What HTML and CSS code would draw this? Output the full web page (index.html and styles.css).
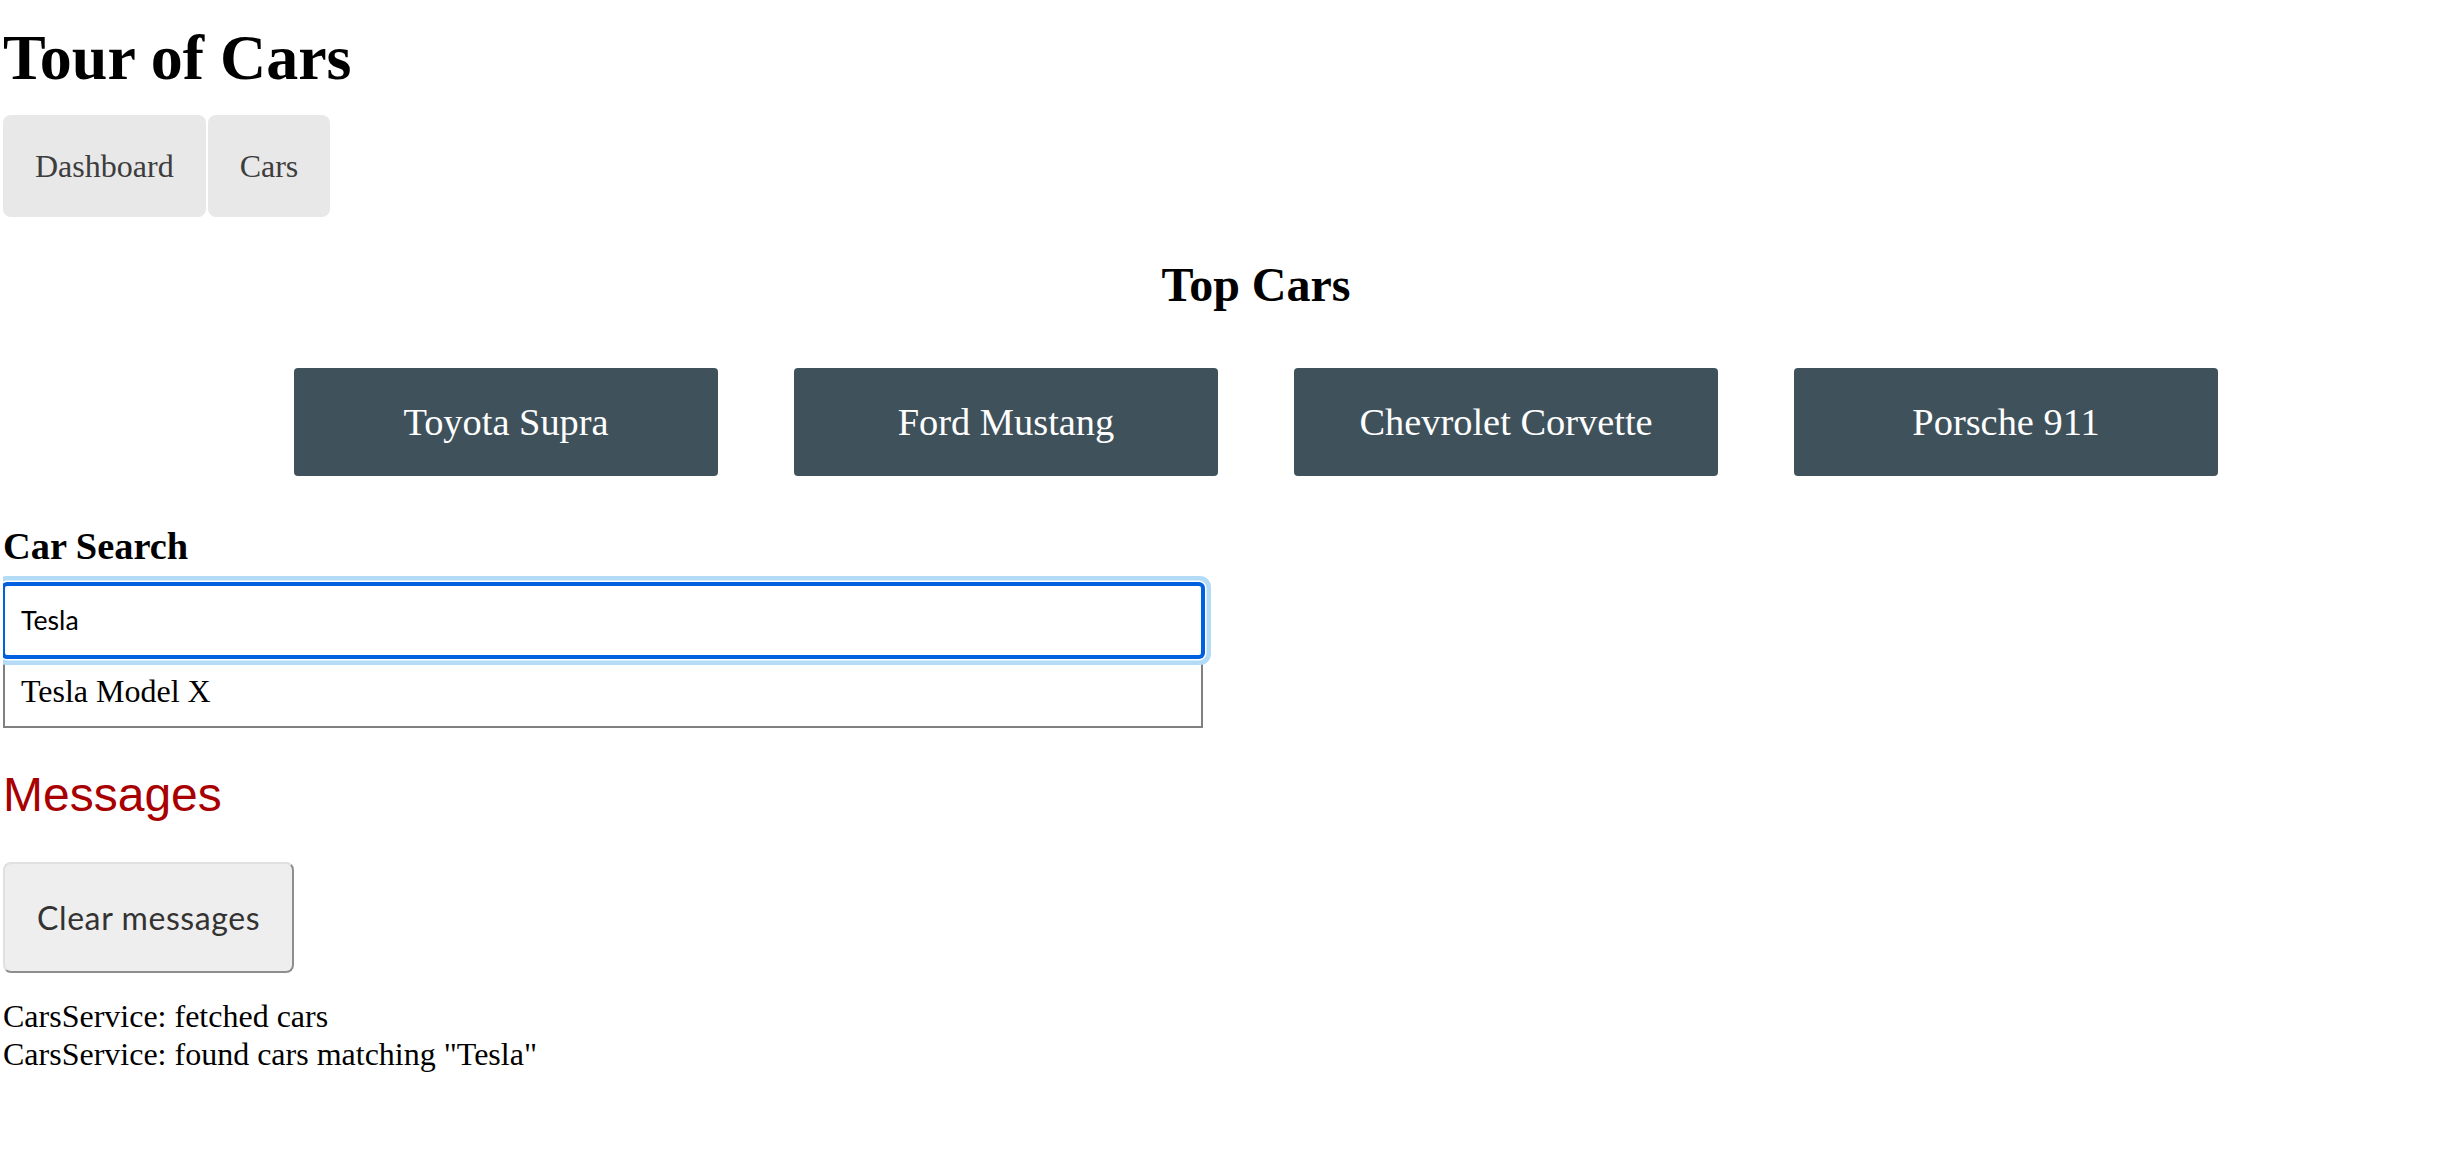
FILE: index.html
```html
<!DOCTYPE html>
<html lang="en">
<head>
<meta charset="utf-8">
<title>Tour of Cars</title>
<link rel="stylesheet" href="styles.css">
</head>
<body>
<div class="app">
  <h1 class="title">Tour of Cars</h1>
  <nav class="main-nav">
    <a class="nav-link" href="#">Dashboard</a>
    <a class="nav-link" href="#">Cars</a>
  </nav>
  <section class="dashboard">
    <h2 class="dash-title">Top Cars</h2>
    <div class="cars-menu">
      <a class="car-card" href="#">Toyota Supra</a>
      <a class="car-card" href="#">Ford Mustang</a>
      <a class="car-card" href="#">Chevrolet Corvette</a>
      <a class="car-card" href="#">Porsche 911</a>
    </div>
    <div class="search">
      <label class="search-label" for="search-box">Car Search</label>
      <input class="search-input" id="search-box" type="text" value="Tesla" autofocus>
      <ul class="search-result">
        <li class="result-item"><a class="result-link" href="#">Tesla Model X</a></li>
      </ul>
    </div>
  </section>
  <section class="messages">
    <h2 class="messages-title">Messages</h2>
    <button type="button" class="clear">Clear messages</button>
    <div class="message">CarsService: fetched cars</div>
    <div class="message">CarsService: found cars matching "Tesla"</div>
  </section>
</div>
</body>
</html>
```
FILE: styles.css
```css
html {
  overflow: hidden;
}

body {
  margin: 0 0 0 3px;
  font-family: "Liberation Serif", "Times New Roman", serif;
  font-size: 32px;
  color: #000;
  background: #fff;
}

.app {
  width: 2506px;
}

.title {
  font-size: 64px;
  font-weight: bold;
  margin: 21px 0 0;
}

.main-nav {
  display: flex;
  gap: 2px;
  margin-top: 20px;
}

.nav-link {
  padding: 32px;
  line-height: 38px;
  text-decoration: none;
  background-color: #e8e8e8;
  color: #3d3d3d;
  border-radius: 8px;
}

.dash-title {
  text-align: center;
  font-size: 48px;
  font-weight: bold;
  margin: 39.84px 0;
}

.cars-menu {
  max-width: 2000px;
  margin: 0 auto;
  display: flex;
  flex-wrap: wrap;
  justify-content: space-around;
  align-items: flex-start;
}

.car-card {
  background-color: #3f525c;
  border-radius: 4px;
  padding: 32px;
  font-size: 38.4px;
  line-height: 44px;
  text-decoration: none;
  color: #fff;
  text-align: center;
  width: 18%;
  min-width: 140px;
  margin: 16px auto;
  box-sizing: content-box;
}

.search-label {
  display: block;
  font-weight: bold;
  font-size: 38.4px;
  margin: 32px 0 16px;
}

.search-input {
  position: relative;
  z-index: 1;
  display: block;
  width: 100%;
  max-width: 1200px;
  box-sizing: border-box;
  margin: 0;
  padding: 16px;
  font-family: Lato, "Open Sans", sans-serif;
  font-size: 26.67px;
  line-height: 37px;
  color: #000;
  background: #fff;
  border: 2px solid #0060df;
  border-radius: 4px;
  box-shadow: 0 0 0 2px #0060df, 0 0 0 3.5px #fff, 0 0 0 8px #b3dbf6;
  outline: none;
}

.search-input:focus {
  outline: none;
}

.search-result {
  margin: 0 0 32px;
  padding: 0;
  list-style: none;
}

.result-link {
  display: inline-block;
  width: 100%;
  max-width: 1200px;
  box-sizing: border-box;
  padding: 16px;
  line-height: 37px;
  border: 2px solid #808080;
  border-top: none;
  color: #000;
  text-decoration: none;
}

.messages-title {
  font-family: "Liberation Sans", Arial, sans-serif;
  font-weight: normal;
  color: #a80000;
  font-size: 48px;
  margin: 39.84px 0;
}

.clear {
  font-family: Lato, "Open Sans", sans-serif;
  font-size: 32px;
  line-height: 43px;
  letter-spacing: 0.6px;
  color: #333;
  background-color: #eee;
  padding: 32px;
  margin: 0 0 24px;
  border: 2px solid;
  border-color: #e0e0e0 #8e8e8e #8e8e8e #e0e0e0;
  border-radius: 8px;
}

.message {
  color: #000;
  line-height: 38px;
}
```
